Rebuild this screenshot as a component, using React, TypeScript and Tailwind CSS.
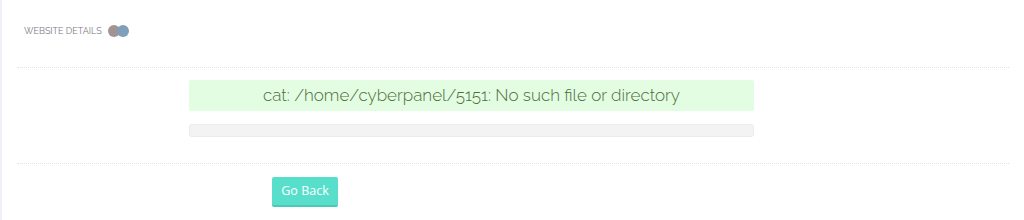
export default function App() {
  return (
    <div className="w-[1024px] h-[220px] bg-white border-l-2 border-[#eef2f7] overflow-hidden" style={{ fontFamily: "Raleway, Lato, 'Open Sans', sans-serif" }}>
      <div className="pl-[15px] pr-[15px]">
        <div className="h-[68px] flex items-start pt-[25px] pl-[7px] border-b border-dotted border-[#e0e4e8]">
          <span className="text-[9px] text-[#7b7b8a] leading-[12px]">WEBSITE DETAILS</span>
          <span className="flex ml-[6px]">
            <span className="w-[12px] h-[12px] rounded-full bg-[#a39494]"></span>
            <span className="w-[12px] h-[12px] rounded-full bg-[#7f9fba] -ml-[3px]"></span>
          </span>
        </div>
        <div className="h-[96px] pt-[12px] border-b border-dotted border-[#e0e4e8]">
          <div className="ml-[172px] w-[565px]">
            <div className="h-[31px] bg-[#e2fde2] rounded-[2px] flex items-center justify-center text-[17px] text-[#4f6b3a] font-light">
              cat: /home/cyberpanel/5151: No such file or directory
            </div>
            <div className="mt-[13px] h-[13px] bg-[#f3f3f3] rounded-[3px] border border-[#ebebeb]"></div>
          </div>
        </div>
        <div className="pt-[13px] pl-[255px]">
          <button className="h-[30px] w-[66px] bg-[#58dfcc] border-b-2 border-[#4cc9b7] rounded-[2px] text-white text-[12.5px] font-medium" style={{ fontFamily: "'Open Sans', sans-serif" }}>
            Go Back
          </button>
        </div>
      </div>
    </div>
  );
}
